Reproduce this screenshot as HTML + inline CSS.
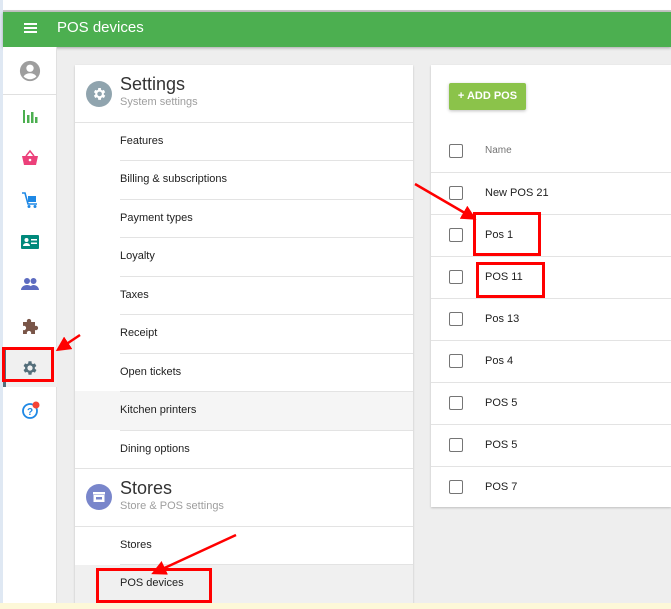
<!DOCTYPE html>
<html><head><meta charset="utf-8"><style>
*{margin:0;padding:0;box-sizing:border-box}
body{width:671px;height:609px;overflow:hidden;background:#eeeeee;font-family:"Liberation Sans",Arial,sans-serif;position:relative;color:#212121}
.abs{position:absolute;white-space:nowrap}
.t{position:absolute;font-size:11px;color:#212121;white-space:nowrap}
.sep{position:absolute;height:1px;background:#e3e3e3}
.cb{position:absolute;width:14px;height:14px;border:1.5px solid #757575;border-radius:2px;left:18px}
.ic{position:absolute;left:21px;width:18px;height:18px}
</style></head><body>
<div class="abs" style="left:0;top:0;width:671px;height:10px;background:#fff"></div>
<div class="abs" style="left:0;top:10px;width:671px;height:2px;background:#c8c8c8"></div>
<div class="abs" style="left:0;top:0;width:3px;height:609px;background:#dfe8f3"></div>
<div class="abs" style="left:3px;top:12px;width:668px;height:35px;background:#4caf50;box-shadow:0 1px 3px rgba(0,0,0,.3)"></div>
<div class="abs" style="left:24px;top:23px;width:13px;height:2px;background:#fff;box-shadow:0 4px 0 #fff,0 8px 0 #fff"></div>
<div class="abs" style="left:57px;top:19px;color:#fff;font-size:15px">POS devices</div>
<!-- sidebar -->
<div class="abs" style="left:3px;top:47px;width:54px;height:562px;background:#fff;border-right:1px solid #e0e0e0"></div>
<svg class="abs" style="left:19px;top:60px" width="22" height="22" viewBox="0 0 24 24"><circle cx="12" cy="12" r="11" fill="#9e9e9e"/><circle cx="12" cy="9" r="4" fill="#fff"/><path d="M5 18c2-3 5-3.5 7-3.5s5 .5 7 3.5c-2 2-4.5 3-7 3s-5-1-7-3z" fill="#fff"/></svg>
<div class="abs" style="left:3px;top:94px;width:54px;height:1px;background:#e0e0e0"></div>
<svg class="ic" style="top:107px" viewBox="0 0 18 18"><rect x="2" y="3" width="2" height="13" fill="#4caf50"/><rect x="6" y="8" width="2.5" height="8" fill="#4caf50"/><rect x="10" y="5" width="2.5" height="11" fill="#4caf50"/><rect x="14" y="10" width="2.5" height="6" fill="#4caf50"/></svg>
<svg class="ic" style="top:149px" viewBox="0 0 18 18"><path d="M1 7h16l-2 9H3z" fill="#ec407a"/><path d="M5 7l4-5 4 5" stroke="#ec407a" stroke-width="1.5" fill="none"/><circle cx="9" cy="11" r="1.3" fill="#fff"/></svg>
<svg class="ic" style="top:191px" viewBox="0 0 18 18"><path d="M1 2h3l3 11h9" stroke="#1e88e5" stroke-width="1.6" fill="none"/><rect x="7" y="5" width="8" height="6" fill="#1e88e5"/><circle cx="8" cy="15.5" r="1.5" fill="#1e88e5"/><circle cx="14" cy="15.5" r="1.5" fill="#1e88e5"/></svg>
<svg class="ic" style="top:233px" viewBox="0 0 18 18"><rect x="0" y="2" width="18" height="14" rx="1" fill="#00897b"/><circle cx="5.5" cy="7" r="2" fill="#fff"/><path d="M2 13c0-2 2-3 3.5-3s3.5 1 3.5 3z" fill="#fff"/><rect x="10" y="6" width="6" height="1.5" fill="#fff"/><rect x="10" y="9.5" width="6" height="1.5" fill="#fff"/></svg>
<svg class="ic" style="top:275px" viewBox="0 0 18 18"><circle cx="6" cy="6" r="3" fill="#5c6bc0"/><circle cx="12.5" cy="6" r="3" fill="#5c6bc0"/><path d="M0 15c0-3 3-5 6-5s6 2 6 5zM9 15c0-3 1-5 3.5-5s5.5 2 5.5 5z" fill="#5c6bc0"/></svg>
<svg class="ic" style="top:317px" viewBox="0 0 18 18"><path d="M2 5h4a2.2 2.2 0 1 1 4 0h4v4a2.2 2.2 0 1 1 0 4v4h-4a2.2 2.2 0 1 0-4 0H2v-4a2.2 2.2 0 1 0 0-4z" fill="#795548"/></svg>
<div class="abs" style="left:3px;top:347px;width:54px;height:40px;background:#f0f0f0;border-left:3px solid #546e7a"></div>
<svg class="ic" style="top:359px" viewBox="0 0 24 24"><path fill="#546e7a" d="M19.4 13a7.5 7.5 0 0 0 0-2l2.1-1.6-2-3.5-2.5 1a7.6 7.6 0 0 0-1.7-1L15 3h-4l-.4 2.9a7.6 7.6 0 0 0-1.7 1l-2.5-1-2 3.5L6.5 11a7.5 7.5 0 0 0 0 2l-2.1 1.6 2 3.5 2.5-1a7.6 7.6 0 0 0 1.7 1L11 21h4l.4-2.9a7.6 7.6 0 0 0 1.7-1l2.5 1 2-3.5zM13 15.5a3.5 3.5 0 1 1 0-7 3.5 3.5 0 0 1 0 7z" transform="translate(-1 0)"/></svg>
<svg class="abs" style="left:20px;top:400px" width="22" height="20" viewBox="0 0 22 20"><circle cx="10" cy="11" r="7" fill="none" stroke="#1e88e5" stroke-width="1.8"/><text x="10" y="15" font-size="10" font-weight="bold" text-anchor="middle" fill="#1e88e5" font-family="Liberation Sans">?</text><circle cx="16" cy="5" r="3.5" fill="#f44336"/></svg>
<!-- settings card -->
<div class="abs" style="left:75px;top:65px;width:338px;height:544px;background:#fff;box-shadow:0 1px 2px rgba(0,0,0,.2)"></div>
<svg class="abs" style="left:86px;top:81px" width="26" height="26" viewBox="0 0 26 26"><circle cx="13" cy="13" r="13" fill="#90a4ae"/><path transform="translate(5 5) scale(.66)" fill="#fff" d="M19.4 13a7.5 7.5 0 0 0 0-2l2.1-1.6-2-3.5-2.5 1a7.6 7.6 0 0 0-1.7-1L15 3h-4l-.4 2.9a7.6 7.6 0 0 0-1.7 1l-2.5-1-2 3.5L6.5 11a7.5 7.5 0 0 0 0 2l-2.1 1.6 2 3.5 2.5-1a7.6 7.6 0 0 0 1.7 1L11 21h4l.4-2.9a7.6 7.6 0 0 0 1.7-1l2.5 1 2-3.5zM13 15.5a3.5 3.5 0 1 1 0-7 3.5 3.5 0 0 1 0 7z"/></svg>
<div class="abs" style="left:120px;top:74px;font-size:18px;color:#333">Settings</div>
<div class="abs" style="left:120px;top:96px;font-size:11px;color:#9e9e9e">System settings</div>
<div class="sep" style="left:75px;top:122px;width:338px"></div>
<div class="abs" style="left:75px;top:391px;width:338px;height:39px;background:#f5f5f5"></div>
<div class="t" style="left:120px;top:135px">Features</div>
<div class="sep" style="left:120px;top:160px;width:293px"></div>
<div class="t" style="left:120px;top:173px">Billing &amp; subscriptions</div>
<div class="sep" style="left:120px;top:199px;width:293px"></div>
<div class="t" style="left:120px;top:212px">Payment types</div>
<div class="sep" style="left:120px;top:237px;width:293px"></div>
<div class="t" style="left:120px;top:250px">Loyalty</div>
<div class="sep" style="left:120px;top:276px;width:293px"></div>
<div class="t" style="left:120px;top:289px">Taxes</div>
<div class="sep" style="left:120px;top:314px;width:293px"></div>
<div class="t" style="left:120px;top:327px">Receipt</div>
<div class="sep" style="left:120px;top:353px;width:293px"></div>
<div class="t" style="left:120px;top:366px">Open tickets</div>
<div class="sep" style="left:120px;top:391px;width:293px"></div>
<div class="t" style="left:120px;top:404px">Kitchen printers</div>
<div class="sep" style="left:120px;top:430px;width:293px"></div>
<div class="t" style="left:120px;top:443px">Dining options</div>
<div class="sep" style="left:75px;top:468px;width:338px"></div>
<svg class="abs" style="left:86px;top:484px" width="26" height="26" viewBox="0 0 26 26"><circle cx="13" cy="13" r="13" fill="#7986cb"/><rect x="7" y="8" width="12" height="2.5" fill="#fff"/><rect x="7.5" y="11" width="11" height="7" fill="#fff"/><rect x="10" y="13" width="6" height="2.5" fill="#7986cb"/></svg>
<div class="abs" style="left:120px;top:478px;font-size:18px;color:#333">Stores</div>
<div class="abs" style="left:120px;top:500px;font-size:11px;color:#9e9e9e">Store &amp; POS settings</div>
<div class="sep" style="left:75px;top:526px;width:338px"></div>
<div class="t" style="left:120px;top:539px">Stores</div>
<div class="sep" style="left:120px;top:564px;width:293px"></div>
<div class="abs" style="left:75px;top:565px;width:338px;height:44px;background:#f0f0f0"></div>
<div class="t" style="left:120px;top:577px">POS devices</div>
<!-- right card -->
<div class="abs" style="left:431px;top:65px;width:240px;height:442px;background:#fff;box-shadow:0 1px 2px rgba(0,0,0,.2)"></div>
<div class="abs" style="left:449px;top:83px;width:77px;height:27px;background:#8bc34a;border-radius:2px;box-shadow:0 1px 3px rgba(0,0,0,.25);color:#fff;font-size:11px;font-weight:bold;text-align:center;line-height:27px">+ ADD POS</div>
<div class="abs" style="left:431px;top:0;width:240px;height:509px">
<div class="cb" style="top:144px"></div><div class="t" style="left:54px;top:145px;font-size:10px;color:#757575">Name</div>
<div class="sep" style="left:0;top:172px;width:240px"></div>
<div class="cb" style="top:186px"></div><div class="t" style="left:54px;top:187px">New POS 21</div>
<div class="sep" style="left:0;top:214px;width:240px"></div>
<div class="cb" style="top:228px"></div><div class="t" style="left:54px;top:229px">Pos 1</div>
<div class="sep" style="left:0;top:256px;width:240px"></div>
<div class="cb" style="top:270px"></div><div class="t" style="left:54px;top:271px">POS 11</div>
<div class="sep" style="left:0;top:298px;width:240px"></div>
<div class="cb" style="top:312px"></div><div class="t" style="left:54px;top:313px">Pos 13</div>
<div class="sep" style="left:0;top:340px;width:240px"></div>
<div class="cb" style="top:354px"></div><div class="t" style="left:54px;top:355px">Pos 4</div>
<div class="sep" style="left:0;top:382px;width:240px"></div>
<div class="cb" style="top:396px"></div><div class="t" style="left:54px;top:397px">POS 5</div>
<div class="sep" style="left:0;top:424px;width:240px"></div>
<div class="cb" style="top:438px"></div><div class="t" style="left:54px;top:439px">POS 5</div>
<div class="sep" style="left:0;top:466px;width:240px"></div>
<div class="cb" style="top:480px"></div><div class="t" style="left:54px;top:481px">POS 7</div>
</div>
<div class="abs" style="left:0;top:603px;width:671px;height:6px;background:#fdf8d8"></div>
<!-- annotations -->
<div class="abs" style="left:2px;top:347px;width:52px;height:35px;border:3px solid #f00"></div>
<div class="abs" style="left:473px;top:212px;width:68px;height:44px;border:3px solid #f00"></div>
<div class="abs" style="left:476px;top:262px;width:69px;height:36px;border:3px solid #f00"></div>
<div class="abs" style="left:96px;top:568px;width:116px;height:35px;border:3px solid #f00"></div>
<svg class="abs" style="left:0;top:0" width="671" height="609">
<defs><marker id="a" markerWidth="6" markerHeight="6" refX="3" refY="3" orient="auto"><path d="M0 0L6 3L0 6z" fill="#f00"/></marker></defs>
<line x1="415" y1="184" x2="470" y2="216" stroke="#f00" stroke-width="2.5" marker-end="url(#a)"/>
<line x1="80" y1="335" x2="62" y2="347" stroke="#f00" stroke-width="2.5" marker-end="url(#a)"/>
<line x1="236" y1="535" x2="158" y2="571" stroke="#f00" stroke-width="2.5" marker-end="url(#a)"/>
</svg>
</body></html>
